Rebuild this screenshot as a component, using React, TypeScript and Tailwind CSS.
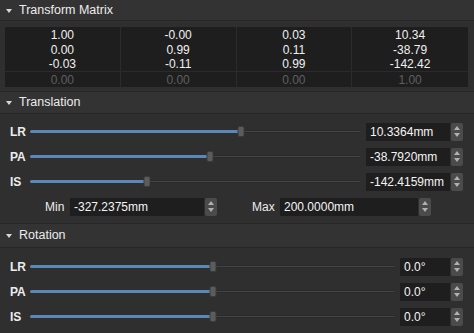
import React from 'react';

const font = { fontFamily: '"Liberation Sans", Arial, sans-serif' };

const matrix = [
    ['1.00', '-0.00', '0.03', '10.34'],
    ['0.00', '0.99', '0.11', '-38.79'],
    ['-0.03', '-0.11', '0.99', '-142.42'],
    ['0.00', '0.00', '0.00', '1.00'],
];

function Header({ title, h }: { title: string; h: string }) {
    return (
        <div className={`flex items-center gap-[7px] pl-[6px] border-b border-[#262626] bg-[#333333] ${h}`}>
            <svg width="6" height="4" viewBox="0 0 6 4" className="mt-[1px]">
                <path d="M0 0 L6 0 L3 4 Z" fill="#d8d8d8" />
            </svg>
            <span className="text-[12.5px] font-medium text-[#ececec]">{title}</span>
        </div>
    );
}

function Spin() {
    return (
        <div className="w-[12px] h-[18px] rounded-[2px] bg-[#4b4b4b] flex flex-col items-center justify-center gap-[3px]">
            <svg width="6" height="4" viewBox="0 0 6 4">
                <path d="M0 4 L6 4 L3 0 Z" fill="#b0b0b0" />
            </svg>
            <svg width="6" height="4" viewBox="0 0 6 4">
                <path d="M0 0 L6 0 L3 4 Z" fill="#b0b0b0" />
            </svg>
        </div>
    );
}

function SpinBox({ value, w }: { value: string; w: string }) {
    return (
        <div className="flex items-center gap-[1px]">
            <div className={`h-[18px] bg-[#1e1e1e] flex items-center pl-[4px] text-[12px] text-[#f4f4f4] ${w}`}>{value}</div>
            <Spin />
        </div>
    );
}

function Slider({ pos }: { pos: number }) {
    return (
        <div className="relative flex-1 h-[11px] flex items-center">
            <div className="w-full h-[3px] rounded-full bg-[#454545] border-y border-[#2a2a2a]" />
            <div className="absolute left-0 h-[3px] rounded-full bg-[#5a88b8]" style={{ width: `${pos * 100}%` }} />
            <div
                className="absolute top-0 w-[7px] h-[11px] rounded-[2px] bg-[#5c5c5c] border border-[#3a3a3a] -translate-x-1/2"
                style={{ left: `${pos * 100}%` }}
            />
        </div>
    );
}

function SliderRow({ label, pos, value, boxW }: { label: string; pos: number; value: string; boxW: string }) {
    return (
        <div className="h-[25px] flex items-center pl-[10px] pr-[11px]">
            <span className="w-[20px] text-[12px] font-bold text-[#ececec]">{label}</span>
            <Slider pos={pos} />
            <div className="ml-[5px]">
                <SpinBox value={value} w={boxW} />
            </div>
        </div>
    );
}

export default function App() {
    return (
        <div className="w-[474px] h-[333px] bg-[#2f2f2f] overflow-hidden select-none" style={font}>
            <Header title="Transform Matrix" h="h-[21px]" />
            <div className="h-[71px] pt-[6px] px-[5px] border-b border-[#262626]">
                <div className="w-[463px] bg-[#1e1e1e] grid grid-cols-4">
                    {matrix.map((row, r) =>
                        row.map((v, c) => (
                            <div
                                key={`${r}-${c}`}
                                className={`h-[15px] flex items-center justify-center text-[12px] leading-none ${c < 3 ? 'border-r border-[#2b2b2b]' : ''} ${r === 2 ? 'border-b border-[#2a2a2a]' : ''} ${r === 3 ? 'text-[#5e5e5e]' : 'text-[#f0f0f0]'}`}
                            >
                                {v}
                            </div>
                        ))
                    )}
                </div>
            </div>

            <Header title="Translation" h="h-[22px]" />
            <div className="h-[110px] pt-[5px] border-b border-[#262626]">
                <SliderRow label="LR" pos={0.636} value="10.3364mm" boxW="w-[84px]" />
                <SliderRow label="PA" pos={0.545} value="-38.7920mm" boxW="w-[84px]" />
                <SliderRow label="IS" pos={0.352} value="-142.4159mm" boxW="w-[84px]" />
                <div className="h-[25px] flex items-center text-[12px] text-[#ececec]">
                    <span className="ml-[45px] w-[20px]">Min</span>
                    <div className="ml-[5px]">
                        <SpinBox value="-327.2375mm" w="w-[134px]" />
                    </div>
                    <span className="ml-[35px] w-[22px]">Max</span>
                    <div className="ml-[6px]">
                        <SpinBox value="200.0000mm" w="w-[138px]" />
                    </div>
                </div>
            </div>

            <Header title="Rotation" h="h-[24px]" />
            <div className="pt-[6px]">
                <SliderRow label="LR" pos={0.501} value="0.0°" boxW="w-[50px]" />
                <SliderRow label="PA" pos={0.501} value="0.0°" boxW="w-[50px]" />
                <SliderRow label="IS" pos={0.501} value="0.0°" boxW="w-[50px]" />
            </div>
        </div>
    );
}
